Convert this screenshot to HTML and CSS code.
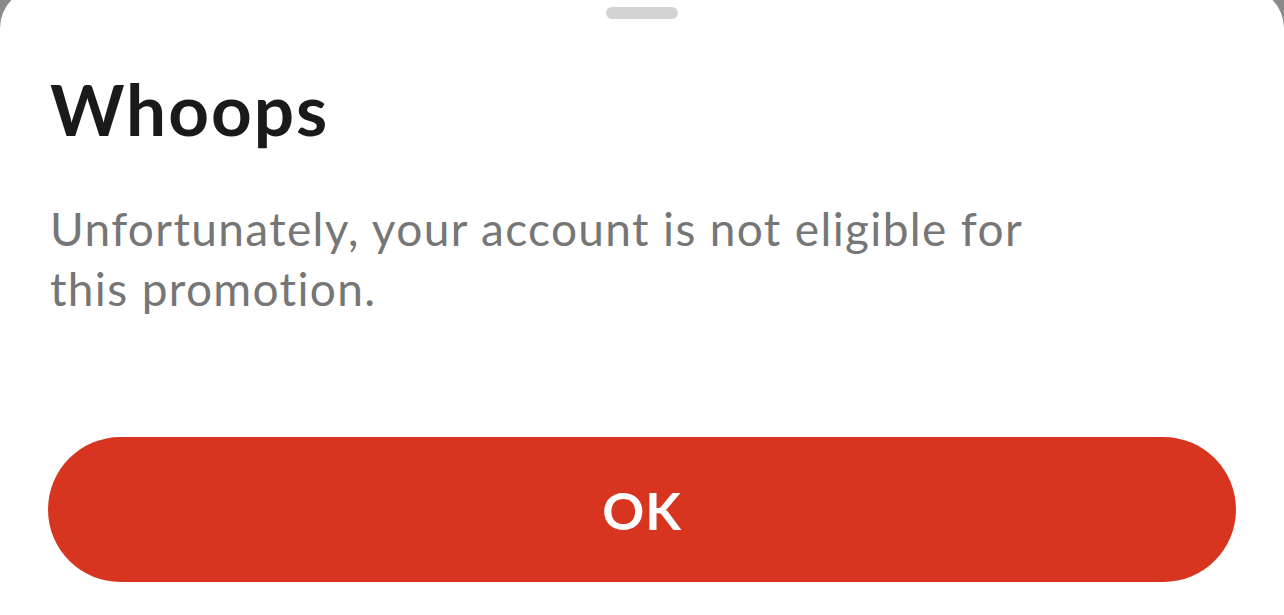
FILE: index.html
```html
<!DOCTYPE html>
<html lang="en">
<head>
    <meta charset="UTF-8">
    <meta name="viewport" content="width=device-width, initial-scale=1.0">
    <title>Whoops</title>
    <link rel="stylesheet" href="styles.css">
</head>
<body>
    <div class="sheet">
        <div class="handle"></div>
        <h1 class="title">Whoops</h1>
        <p class="message">Unfortunately, your account is not eligible for<br>this promotion.</p>
        <button class="ok-button" type="button">OK</button>
    </div>
</body>
</html>
```

FILE: styles.css
```css
html, body {
    height: 100%;
}
body {
    margin: 0;
    background-color: #8a8a8a;
    font-family: Lato, "Noto Sans", sans-serif;
    overflow: hidden;
}
.sheet {
    box-sizing: border-box;
    margin-top: -12px;
    height: calc(100% + 12px);
    padding: 19px 48px 0;
    background-color: #ffffff;
    border-radius: 40px 40px 0 0;
    display: flex;
    flex-direction: column;
}
.handle {
    align-self: center;
    width: 72px;
    height: 12px;
    border-radius: 6px;
    background-color: #d3d3d3;
}
.title {
    margin: 50px 0 0 2px;
    font-size: 71px;
    line-height: 80px;
    font-weight: 700;
    letter-spacing: 2px;
    color: #1a1a1a;
}
.message {
    margin: 50px 0 0 2px;
    font-size: 46px;
    line-height: 60px;
    letter-spacing: 1.35px;
    color: #767676;
}
.ok-button {
    margin-top: 118px;
    height: 145px;
    border: none;
    border-radius: 73px;
    background-color: #d73520;
    color: #ffffff;
    font-family: inherit;
    font-size: 52px;
    font-weight: 700;
    letter-spacing: 1px;
    cursor: pointer;
}
```
